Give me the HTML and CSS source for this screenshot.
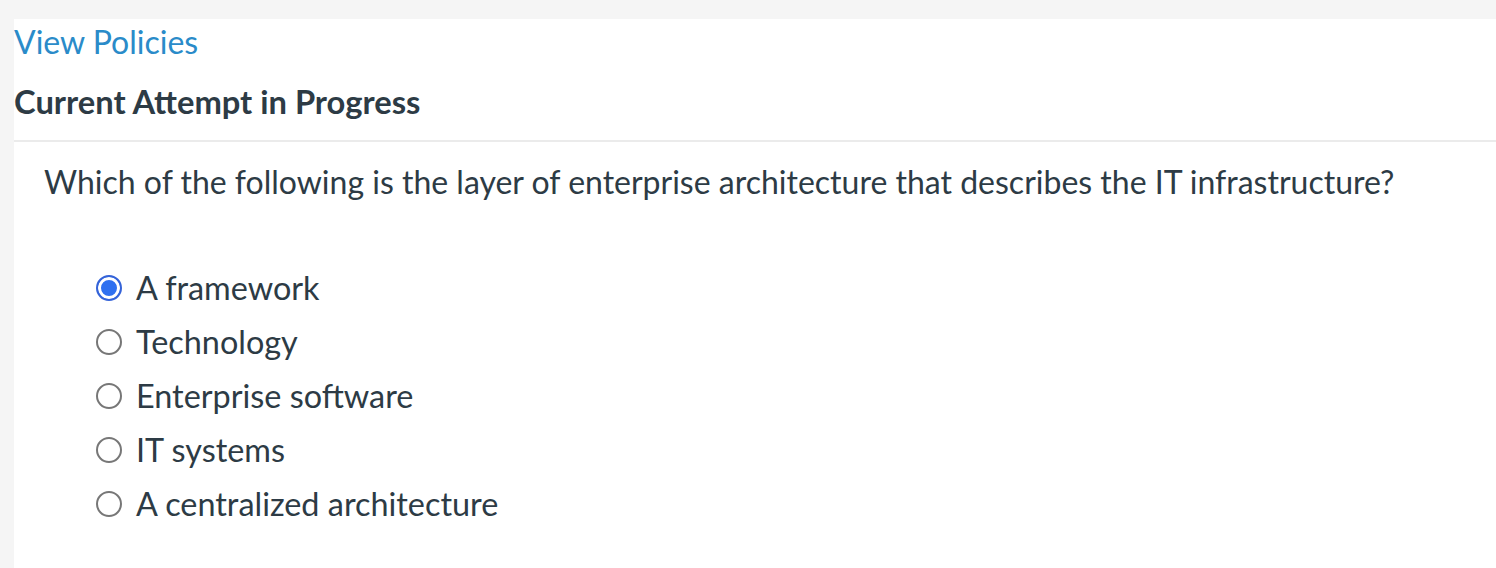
FILE: index.html
```html
<!DOCTYPE html>
<html>
<head>
<meta charset="utf-8">
<link rel="stylesheet" href="styles.css">
</head>
<body>
<div class="panel">
  <a class="policies" href="#">View Policies</a>
  <h2 class="attempt">Current Attempt in Progress</h2>
  <div class="question">
    <p class="qtext">Which of the following is the layer of enterprise architecture that describes the IT infrastructure?</p>
    <ul class="options">
      <li class="opt"><span class="radio checked"></span><span>A framework</span></li>
      <li class="opt"><span class="radio"></span><span>Technology</span></li>
      <li class="opt"><span class="radio"></span><span>Enterprise software</span></li>
      <li class="opt"><span class="radio"></span><span>IT systems</span></li>
      <li class="opt"><span class="radio"></span><span>A centralized architecture</span></li>
    </ul>
  </div>
</div>
</body>
</html>
```

FILE: styles.css
```css
html, body {
  margin: 0;
  padding: 0;
  background: #f5f5f5;
  height: 100%;
  overflow: hidden;
}
body {
  padding: 19px 0 0 14px;
  font-family: Lato, "Open Sans", sans-serif;
  color: #2d3b45;
}
.panel {
  background: #fff;
  height: 549px;
}
.policies {
  display: block;
  font-size: 32px;
  line-height: 46px;
  color: #2a8bc9;
  text-decoration: none;
}
.attempt {
  margin: 0;
  font-size: 32.7px;
  font-weight: 700;
  line-height: 36px;
  padding: 19px 0 20px;
  border-bottom: 2px solid #ebebeb;
}
.question {
  padding: 0 0 0 30px;
}
.qtext {
  margin: 0;
  padding-top: 20px;
  font-size: 32px;
  line-height: 40px;
}
.options {
  list-style: none;
  margin: 66px 0 0 0;
  padding: 0 0 0 52px;
  display: flex;
  flex-direction: column;
  gap: 14px;
}
.opt {
  display: flex;
  align-items: center;
  gap: 14px;
  font-size: 32.4px;
  line-height: 40px;
}
.radio {
  box-sizing: border-box;
  width: 26px;
  height: 26px;
  border-radius: 50%;
  border: 2px solid #777;
  background: #fff;
  flex: none;
}
.radio.checked {
  border: 2px solid #3563d8;
  background: #2f70f0;
  box-shadow: inset 0 0 0 3px #fff;
}
```
